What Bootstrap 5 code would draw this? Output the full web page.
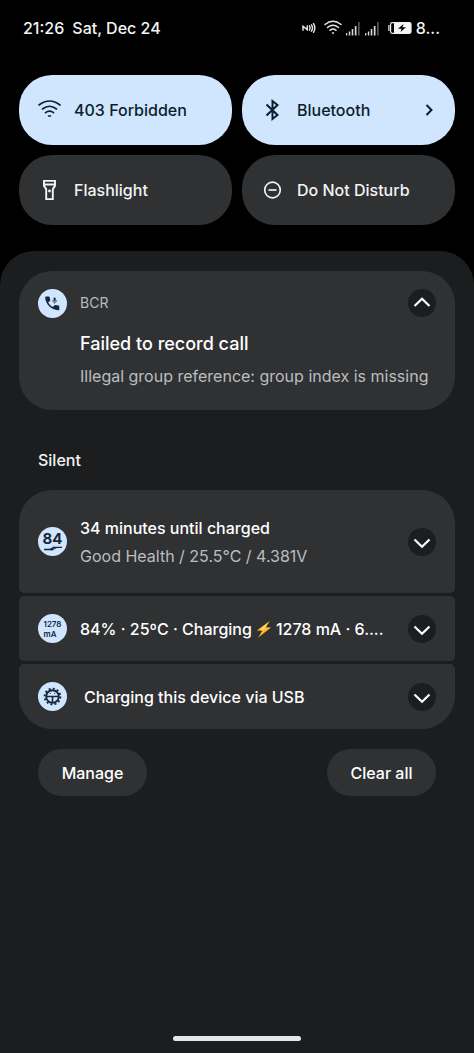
<!DOCTYPE html>
<html lang="en">
<head>
<meta charset="utf-8">
<meta name="viewport" content="width=device-width, initial-scale=1">
<title>Notifications</title>
<link href="https://cdn.jsdelivr.net/npm/bootstrap@5.3.0/dist/css/bootstrap.min.css" rel="stylesheet">
<style>
  :root { --accent: #d0e6ff; --ink: #0c1d2b; --surface: #303133; --panel: #1c1d1f; }
  body { background: #000; color: #f3f4f5; font-family: Inter, Roboto, "Liberation Sans", sans-serif; font-size: 16px; line-height: 24px; font-weight: 500; }
  button { font-weight: 500; }
  svg { display: block; flex: none; }
  .status-bar { height: 55px; padding: 0 34px 0 23px; }
  .status-icons { gap: 4px; }
  .tiles { --bs-gutter-x: 10px; --bs-gutter-y: 10px; }
  .edge { padding-left: 19px; padding-right: 19px; }
  .tile { height: 70px; padding: 0 20px 0 18px; border: 0; border-radius: 33px; background: var(--surface); color: #f3f4f5; gap: 12px; }
  .tile-on { background: var(--accent); color: var(--ink); }
  .shade { background: var(--panel); border-radius: 34px 34px 0 0; margin-top: 26px; padding-top: 20px; }
  .note { background: var(--surface); border-radius: 5px; padding: 0 19px; gap: 13px; }
  .note-solo { border-radius: 33px; padding-top: 18px; padding-bottom: 20px; height: 139px; }
  .stack { gap: 3px; }
  .stack .note:first-child { border-radius: 33px 33px 5px 5px; height: 103px; }
  .stack .note { height: 65px; }
  .stack .note:last-child { border-radius: 5px 5px 33px 33px; }
  .dot { width: 29px; height: 29px; border-radius: 50%; background: var(--accent); color: #16283a; flex: none; }
  .toggle { width: 28px; height: 28px; border: 0; padding: 0; border-radius: 50%; background: var(--panel); color: #fff; flex: none; }
  .app-name { font-size: 14px; font-weight: 400; color: #b9bbbd; }
  .headline { font-size: 18px; font-weight: 500; color: #fff; margin-top: 15px; }
  .detail { color: #babec1; font-weight: 400; }
  .line { min-width: 0; color: #fff; }
  .tiny { font-size: 8px; line-height: 10px; font-weight: 600; }
  .percent { font-size: 15px; line-height: 14px; font-weight: 700; }
  .section-title { padding: 38px 0 18px 19px; margin: 0; font-size: 16px; font-weight: 500; line-height: 24px; }
  .pill { width: 109px; height: 47px; border: 0; border-radius: 24px; background: var(--surface); color: #fff; padding: 0; }
  .home-bar { width: 128px; height: 5px; border-radius: 3px; background: #e4e6e8; margin: auto auto 12px; }
</style>
</head>
<body class="min-vh-100 d-flex flex-column">

<header class="status-bar d-flex align-items-center justify-content-between">
  <div class="d-flex gap-2"><time>21:26</time><span>Sat, Dec 24</span></div>
  <div class="status-icons d-flex align-items-center">
    <svg width="14" height="12" viewBox="0 0 16 14" fill="none" stroke="#e6e6e6" stroke-width="1.700" stroke-linecap="round" aria-label="NFC"><path d="M1 9.500V5L6 9V4.500M8.500 4.500q1.500 2.500 0 5M10.900 3.300q2.300 3.700 0 7.400M13.300 2q3 5 0 10"/></svg>
    <svg class="ms-1" width="18" height="15" viewBox="0 0 18 15" fill="none" stroke="#e6e6e6" stroke-width="1.500" stroke-linecap="round" aria-label="Wi-Fi"><path d="M1 4.500q8-6.500 16 0M3.500 7.500q5.500-4.500 11 0M6 10.300q3-2.500 6 0M8.500 13h1"/></svg>
    <svg width="15" height="16" viewBox="0 0 15 16" aria-label="Signal"><path fill="#d5d5d5" d="M0 13h1.300v2.500H0zM2.800 11.500h1.500v4H2.800zM5.700 9h1.600v6.500H5.700zM8.800 6h1.700v9.500H8.800z"/><path fill="#555" d="M12 2h1.700v13.500H12z"/></svg>
    <svg width="15" height="16" viewBox="0 0 15 16" aria-label="Signal"><path fill="#d5d5d5" d="M0 13h1.300v2.500H0zM2.800 11.500h1.500v4H2.800zM5.700 9h1.600v6.500H5.700zM8.800 6h1.700v9.500H8.800z"/><path fill="#555" d="M12 2h1.700v13.500H12z"/></svg>
    <svg class="ms-1" width="24" height="12" viewBox="0 0 24 12" aria-label="Battery charging"><rect x="2.600" y=".7" width="20.400" height="10.600" rx="1.500" fill="#000" stroke="#eee" stroke-width="1.200"/><path fill="#f3f3f3" d="M6 1h17v10H6zM1.500 3v6H.3V3z"/><path fill="#000" d="M15.500 2L10 6.700h3.500L12.500 10l5.500-4.700h-3.500z"/></svg>
    <span>8...</span>
  </div>
</header>

<section class="edge mt-3 pt-1">
  <div class="row tiles">
    <div class="col-6"><button type="button" class="tile tile-on w-100 d-flex align-items-center">
      <svg width="25" height="24" viewBox="0 0 25 24" fill="none" stroke="currentColor" stroke-width="1.600" stroke-linecap="round"><path d="M2 7q10.500-8 21 0M5.500 11q7-5.500 14 0M8.500 14.700q4-3.200 8 0M11.500 18h2"/></svg>
      <span>403 Forbidden</span></button></div>
    <div class="col-6"><button type="button" class="tile tile-on w-100 d-flex align-items-center">
      <svg width="25" height="24" viewBox="0 0 25 24" fill="none" stroke="currentColor" stroke-width="2"><path d="M6.500 6.500L17.500 17l-5 4V3l5 4L6.500 17.500"/></svg>
      <span>Bluetooth</span>
      <svg class="ms-auto" width="12" height="14" viewBox="0 0 12 14" fill="none" stroke="currentColor" stroke-width="2"><path d="M3.500 2l5 5-5 5"/></svg></button></div>
    <div class="col-6"><button type="button" class="tile w-100 d-flex align-items-center">
      <svg width="25" height="24" viewBox="0 0 25 24" fill="none" stroke="currentColor" stroke-width="1.900"><path d="M7 2.900h11v5l-2.200 3.200v10H9.200v-10L7 7.900zM7 6.500h11"/><circle cx="12.500" cy="13" r="1.400" fill="currentColor" stroke="none"/></svg>
      <span>Flashlight</span></button></div>
    <div class="col-6"><button type="button" class="tile w-100 d-flex align-items-center">
      <svg width="25" height="24" viewBox="0 0 25 24" fill="none" stroke="currentColor" stroke-width="1.700"><circle cx="12.500" cy="12" r="7.800"/><path d="M8.500 12h8"/></svg>
      <span>Do Not Disturb</span></button></div>
  </div>
</section>

<main class="shade edge flex-grow-1 d-flex flex-column">
  <article class="note note-solo d-flex align-items-start">
    <div class="dot">
      <svg width="29" height="29" viewBox="0 0 29 29" fill="currentColor"><path d="M8 7.500h2.800c.5 0 .8.300.9.800l.5 2.700c.1.400 0 .700-.3 1l-1.700 1.500c1.300 2.200 2.700 3.500 4.700 4.500l1.600-1.700c.3-.300.6-.400 1-.300l3 .6c.5.100.8.400.8.900v2.700c0 .6-.4 1-1 1C13 21 7.500 15 7.200 8.500c0-.6.300-1 .8-1z"/><rect x="15.600" y="8.500" width="2" height="4" rx="1"/><path d="M14.500 11.300q0 2.200 2.100 2.200t2.100-2.200M16.600 13.500v1.300" fill="none" stroke="currentColor" stroke-width=".6"/></svg>
    </div>
    <div class="flex-grow-1 line">
      <div class="d-flex align-items-center justify-content-between">
        <span class="app-name">BCR</span>
        <button type="button" class="toggle" aria-label="Collapse"><svg width="28" height="28" viewBox="0 0 28 28" fill="none" stroke="currentColor" stroke-width="2.200"><path d="M6.500 17L14 9.800l7.500 7.200"/></svg></button>
      </div>
      <div class="headline text-nowrap">Failed to record call</div>
      <div class="detail mt-2 text-nowrap">Illegal group reference: group index is missing</div>
    </div>
  </article>

  <h2 class="section-title">Silent</h2>

  <div class="stack d-flex flex-column">
    <article class="note d-flex align-items-center">
      <div class="dot d-flex flex-column align-items-center justify-content-center"><span class="percent">84</span>
        <svg width="20" height="5" viewBox="0 0 20 5" fill="none" stroke="currentColor" stroke-width="1.300"><path d="M1 3.500h9M10 1.300h9"/><path d="M5 3.800L11 .5 10 2.200h4L8 4.800l1-1.500z" fill="currentColor" stroke="none"/></svg></div>
      <div class="line flex-grow-1"><div>34 minutes until charged</div><div class="detail mt-1">Good Health / 25.5°C / 4.381V</div></div>
      <button type="button" class="toggle" aria-label="Expand"><svg width="28" height="28" viewBox="0 0 28 28" fill="none" stroke="currentColor" stroke-width="2.200"><path d="M6.500 11.500L14 18.700l7.500-7.200"/></svg></button>
    </article>
    <article class="note d-flex align-items-center">
      <div class="dot d-flex align-items-center justify-content-center"><span class="tiny">1278<br>mA</span></div>
      <div class="line flex-grow-1 d-flex align-items-center text-nowrap">
        <span>84% · 25ºC · Charging</span>
        <svg class="mx-1" width="16" height="20" viewBox="0 0 18 20" role="img" aria-label="High voltage"><path fill="#ffb52e" d="M15.500 1L1 11.700l6 .3L2.500 19.500 17 8.300l-6-.300z"/><path fill="#ffd45c" d="M14 2.500L3.500 10.700l5.500.3z"/></svg>
        <span>1278 mA · 6....</span>
      </div>
      <button type="button" class="toggle" aria-label="Expand"><svg width="28" height="28" viewBox="0 0 28 28" fill="none" stroke="currentColor" stroke-width="2.200"><path d="M6.500 11.500L14 18.700l7.500-7.200"/></svg></button>
    </article>
    <article class="note d-flex align-items-center">
      <div class="dot"><svg width="29" height="29" viewBox="0 0 29 29" fill="none" stroke="currentColor"><circle cx="14.500" cy="14.500" r="6.300" stroke-width="1.900"/><circle cx="14.500" cy="14.500" r="7.900" stroke-width="1.900" stroke-dasharray="2 2.136"/><path d="M8 14.500h13M14.500 14.500v6" stroke-width="1.600"/><path d="M11.800 11.500h.9M16.300 11.500h.9" stroke-width="1"/></svg></div>
      <div class="line flex-grow-1 ps-1">Charging this device via USB</div>
      <button type="button" class="toggle" aria-label="Expand"><svg width="28" height="28" viewBox="0 0 28 28" fill="none" stroke="currentColor" stroke-width="2.200"><path d="M6.500 11.500L14 18.700l7.500-7.200"/></svg></button>
    </article>
  </div>

  <div class="edge d-flex justify-content-between mt-3 pt-1">
    <button type="button" class="pill">Manage</button>
    <button type="button" class="pill">Clear all</button>
  </div>

  <div class="home-bar"></div>
</main>

<script src="https://cdn.jsdelivr.net/npm/bootstrap@5.3.0/dist/js/bootstrap.bundle.min.js"></script>
</body>
</html>
